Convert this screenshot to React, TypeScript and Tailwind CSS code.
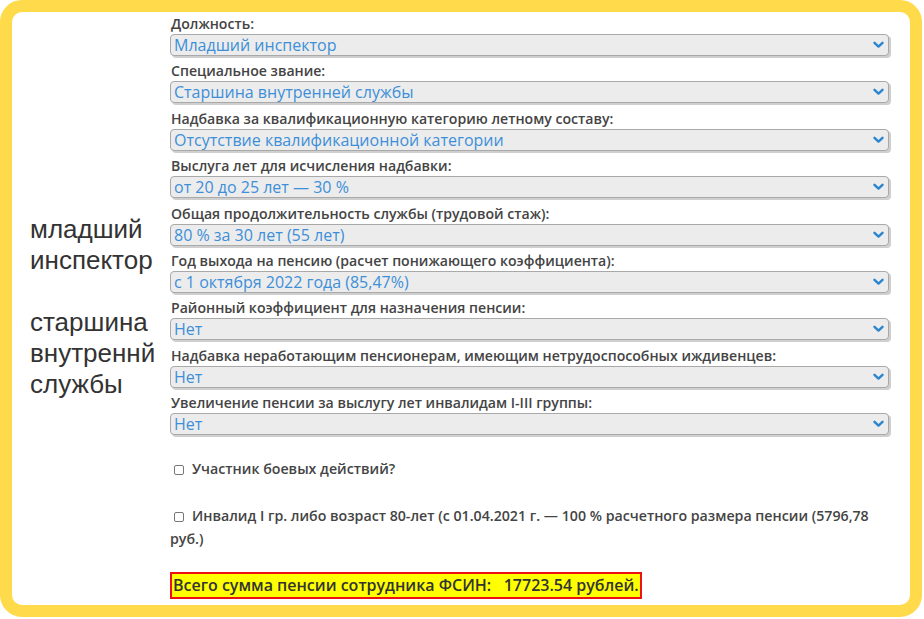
import React from "react";

const fields: [string, string][] = [
  ["Должность:", "Младший инспектор"],
  ["Специальное звание:", "Старшина внутренней службы"],
  ["Надбавка за квалификационную категорию летному составу:", "Отсутствие квалификационной категории"],
  ["Выслуга лет для исчисления надбавки:", "от 20 до 25 лет — 30 %"],
  ["Общая продолжительность службы (трудовой стаж):", "80 % за 30 лет (55 лет)"],
  ["Год выхода на пенсию (расчет понижающего коэффициента):", "с 1 октября 2022 года (85,47%)"],
  ["Районный коэффициент для назначения пенсии:", "Нет"],
  ["Надбавка неработающим пенсионерам, имеющим нетрудоспособных иждивенцев:", "Нет"],
  ["Увеличение пенсии за выслугу лет инвалидам I-III группы:", "Нет"],
];

function Chevron() {
  return (
    <svg width="11" height="8" viewBox="0 0 11 8" className="shrink-0">
      <path d="M1.5 1.8 L5.5 5.6 L9.5 1.8" fill="none" stroke="#2a85d0" strokeWidth="2.4" strokeLinecap="round" strokeLinejoin="round" />
    </svg>
  );
}

function Select({ value }: { value: string }) {
  return (
    <div className="h-[22px] flex items-center justify-between rounded-[4px] border border-[#a9a9a9] bg-[#ececec] pl-[3px] pr-[4px] shadow-[2px_2px_0_#cfcfcf] text-[16px] leading-none text-[#3d8fd9]">
      <span>{value}</span>
      <Chevron />
    </div>
  );
}

function Checkbox() {
  return <span className="inline-block w-[10px] h-[10px] border border-[#777] rounded-[2px] bg-white align-[-1px] mr-[8px] ml-[4px]" />;
}

export default function App() {
  return (
    <div className="w-[924px] h-[619px] bg-white" style={{ fontFamily: '"Open Sans", sans-serif' }}>
      <div className="w-[922px] h-[617px] border-[12px] border-[#ffda4b] rounded-[22px] flex bg-white">
        <div className="w-[158px] shrink-0 flex items-center pl-[18px] pb-[4px]">
          <div className="text-[26px] leading-[31px] text-[#333]" style={{ fontFamily: '"Liberation Sans", Arial, sans-serif' }}>
            <div>младший</div>
            <div>инспектор</div>
            <div className="h-[31px]" />
            <div>старшина</div>
            <div>внутреннй</div>
            <div>службы</div>
          </div>
        </div>
        <div className="flex-1 pr-[21px] pt-[1px]">
          {fields.map(([label, value]) => (
            <div key={label} className="mb-[4.4px]">
              <div className="text-[14.1px] font-semibold text-[#444] leading-[21px] pl-[1px]">{label}</div>
              <Select value={value} />
            </div>
          ))}
          <div className="mt-[22px] text-[14.2px] font-semibold text-[#444] leading-[23px]">
            <Checkbox />Участник боевых действий?
          </div>
          <div className="mt-[24px] text-[14.2px] font-semibold text-[#444] leading-[23px]">
            <Checkbox />Инвалид I гр. либо возраст 80-лет (с 01.04.2021 г. — 100 % расчетного размера пенсии (5796,78 руб.)
          </div>
          <div className="mt-[22px]">
            <span className="inline-block border-2 border-[#ee1111] bg-[#ffff00] px-[1px] h-[27px] leading-[23px] text-[16px] font-semibold text-[#333] whitespace-pre">
              Всего сумма пенсии сотрудника ФСИН:   17723.54 рублей.
            </span>
          </div>
        </div>
      </div>
    </div>
  );
}
